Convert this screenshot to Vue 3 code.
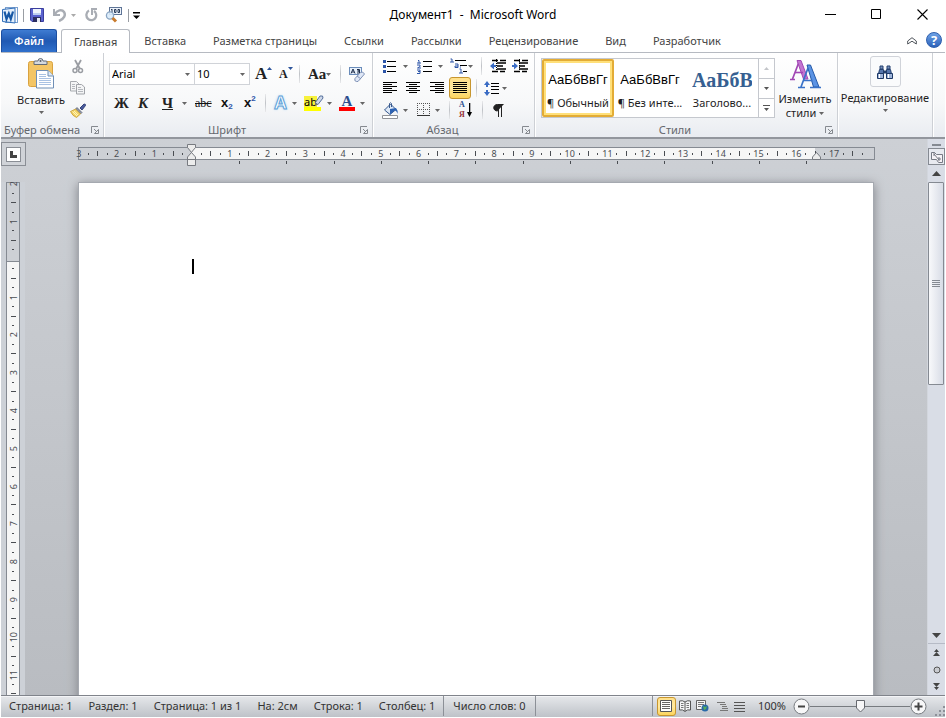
<script setup>
import { ref } from 'vue'

const tabs = ['Вставка', 'Разметка страницы', 'Ссылки', 'Рассылки', 'Рецензирование', 'Вид', 'Разработчик']
const font = ref('Arial')
const size = ref('10')
const zoom = ref(100)
const hMarks = ['3', '2', '1', '', ...Array.from({ length: 17 }, (_, i) => String(i + 1))]
const vMarks = ['2', '1', '', ...Array.from({ length: 27 }, (_, i) => String(i + 1))]
const status = ['Страница: 1', 'Раздел: 1', 'Страница: 1 из 1', 'На: 2см', 'Строка: 1', 'Столбец: 1']
</script>

<template>
  <div class="window">
    <header class="titlebar">
      <div class="quick">
        <svg class="logo" width="17" height="17" viewBox="0 0 17 17">
          <rect x="3.5" y=".5" width="12" height="15" fill="#fff" stroke="#7ba0cf" />
          <path d="M.5 2.500 13 1v15L.5 14.500z" fill="#e3effc" stroke="#2f6db8" />
          <path d="M2.500 4.500 4.500 12 6.800 6.500 8.800 12 11 4.500" fill="none" stroke="#1758a6" stroke-width="2.200" />
        </svg>
        <i class="rule" />
        <button aria-label="Сохранить"><svg width="15" height="15" viewBox="0 0 15 15">
          <path d="M.5.5h13v13H2L.5 12z" fill="#5a62cf" stroke="#3b3f9e" />
          <path d="M3 1h8v6H3z" fill="#eef3fc" /><path d="M3 5h8v2H3z" fill="#bccdf0" />
          <path d="M3 9h8v5H3z" fill="#2b2d60" /><path d="M7 10h3v4H7z" fill="#e9edf8" />
        </svg></button>
        <button aria-label="Отменить"><svg width="13" height="14" viewBox="0 0 13 14">
          <path d="M1 1v6h6" fill="none" stroke="#a9adb4" stroke-width="2" />
          <path d="M2 6c2-4 7-5 9-2s0 7-5 9" fill="none" stroke="#a9adb4" stroke-width="2.500" />
        </svg></button>
        <svg class="arrow pale" width="5" height="3" viewBox="0 0 5 3"><path d="M0 0h5L2.500 3z" /></svg>
        <button aria-label="Повторить"><svg width="13" height="14" viewBox="0 0 13 14">
          <path d="M4 2.500C1 4 .5 8.500 3 10.800s6.500 1.500 7.700-1.300S10.500 4 9 3" fill="none" stroke="#a9adb4" stroke-width="2.300" />
          <path d="M12 1H7v6" fill="none" stroke="#a9adb4" stroke-width="2" />
        </svg></button>
        <button aria-label="Масштаб 100%"><svg width="17" height="16" viewBox="0 0 17 16">
          <rect x="4.500" y=".5" width="12" height="7" fill="#edf3fb" stroke="#5e7496" />
          <path d="M7 2v4M6 2.500h1M9.500 2.500h1.500v3H9.500zM13 2.500h1.500v3H13z" fill="none" stroke="#283a59" />
          <circle cx="5" cy="8.500" r="3.600" fill="#d9ebf9" fill-opacity=".9" stroke="#8ba6c4" stroke-width="1.300" />
          <path d="m7.500 11 3.500 3.500" stroke="#c97b2d" stroke-width="3" />
        </svg></button>
        <i class="rule" />
        <button aria-label="Настройка панели"><svg width="7" height="7" viewBox="0 0 7 7"><path d="M0 0h7v1.500H0zM0 3.500h7L3.500 7z" /></svg></button>
      </div>
      <h1>Документ1&nbsp; -&nbsp; Microsoft Word</h1>
      <div class="winbtns">
        <button aria-label="Свернуть"><svg width="11" height="11" viewBox="0 0 11 11"><path d="M0 5.500h11" stroke="#000" /></svg></button>
        <button aria-label="Развернуть"><svg width="11" height="11" viewBox="0 0 11 11"><path d="M.5.5h9v9h-9z" fill="none" stroke="#000" /></svg></button>
        <button aria-label="Закрыть"><svg width="11" height="11" viewBox="0 0 11 11"><path d="m.5.5 10 10M10.500.5l-10 10" stroke="#000" stroke-width="1.100" /></svg></button>
      </div>
    </header>

    <nav class="tabs">
      <button class="file">Файл</button>
      <button class="tab active">Главная</button>
      <button v-for="t in tabs" :key="t" class="tab">{{ t }}</button>
      <span class="spacer" />
      <button aria-label="Свернуть ленту"><svg width="10" height="8" viewBox="0 0 10 8"><path d="M.7 4 5 .7 9.300 4v3L5 4.200.7 7z" fill="#fff" stroke="#50555c" /></svg></button>
      <button class="help" aria-label="Справка">?</button>
    </nav>

    <section class="ribbon">
      <div class="group clipboard">
        <div class="body">
          <button class="big paste">
            <svg width="27" height="32" viewBox="0 0 27 32">
              <rect x=".5" y="3.500" width="24" height="25" rx="2" fill="#f3c565" stroke="#d9a23f" />
              <path d="M6 6.500V4q0-1 1-1h3q0-2.500 2.500-2.500T15 3h3q1 0 1 1v2.500z" fill="#d4d9df" stroke="#626b77" /><circle cx="12.500" cy="3" r="1" fill="#58606b" />
              <path d="M8.500 12.500H20l5.500 5.500v12h-17z" fill="#fff" stroke="#6f8fb6" />
              <path d="M20 12.500V18h5.500" fill="#dce8f6" stroke="#6f8fb6" />
              <path d="M11 16.500h7M11 18.500h7M11 20.500h12M11 22.500h12M11 24.500h12M11 26.500h12" stroke="#a9c2e3" />
            </svg>
            <span>Вставить</span>
            <svg class="arrow" width="5" height="3" viewBox="0 0 5 3"><path d="M0 0h5L2.500 3z" /></svg>
          </button>
          <div class="stack">
            <button aria-label="Вырезать"><svg width="12" height="15" viewBox="0 0 12 15">
              <path d="m3 1 5 9M9 1l-5 9" stroke="#9a9da3" stroke-width="1.800" />
              <circle cx="3" cy="11.500" r="2" fill="none" stroke="#9a9da3" stroke-width="1.500" /><circle cx="8.500" cy="11.500" r="2" fill="none" stroke="#9a9da3" stroke-width="1.500" />
            </svg></button>
            <button aria-label="Копировать"><svg width="16" height="14" viewBox="0 0 16 14">
              <path d="M.5.5h6l2.500 2.500v7H.5z" fill="#f4f5f6" stroke="#a7aaaf" /><path d="M6.500 3.500h5L14.500 6v7h-8z" fill="#f4f5f6" stroke="#a0a3a8" />
              <path d="M2 3.500h3M2 5.500h3M2 7.500h3M8 6.500h3M8 8.500h5M8 10.500h5" stroke="#b5b8bd" />
            </svg></button>
            <button aria-label="Формат по образцу"><svg width="16" height="15" viewBox="0 0 16 15">
              <path d="m10 5 4-4q2 0 1.500 1.500L12 7z" fill="#4a5c9d" stroke="#36447b" />
              <path d="m7 4.500 5 5-1.500 1.500-5-5z" fill="#8d93a6" stroke="#585e70" stroke-width=".7" />
              <path d="m5.500 6 5 5-4 3.500Q2.500 13 .5 8.500z" fill="#f2d468" stroke="#c59a31" stroke-width=".8" /><path d="m4 8 4 4M2.500 8.500l4.500 4.500" stroke="#fff3b5" />
            </svg></button>
          </div>
        </div>
        <footer><span>Буфер обмена</span><svg class="launch" width="8" height="8" viewBox="0 0 8 8"><path d="M.5 7V.5H7M3 3l3 3M7.500 3.500v4h-4z" /></svg></footer>
      </div>

      <div class="group fontgroup">
        <div class="body">
          <div class="row r-font1">
            <label class="combo"><select v-model="font" aria-label="Шрифт"><option>Arial</option></select><svg class="arrow" width="5" height="3" viewBox="0 0 5 3"><path d="M0 0h5L2.500 3z" /></svg></label>
            <label class="combo short"><select v-model="size" aria-label="Размер"><option>10</option></select><svg class="arrow" width="5" height="3" viewBox="0 0 5 3"><path d="M0 0h5L2.500 3z" /></svg></label>
            <button class="serif grow">A<svg width="5" height="3" viewBox="0 0 5 3"><path d="M0 3h5L2.500 0z" fill="#2d549b" /></svg></button>
            <button class="serif shrink">A<svg width="5" height="3" viewBox="0 0 5 3"><path d="M0 0h5L2.500 3z" fill="#2d549b" /></svg></button>
            <i class="rule" />
            <button class="serif case">Aa</button>
            <svg class="arrow" width="5" height="3" viewBox="0 0 5 3"><path d="M0 0h5L2.500 3z" /></svg>
            <i class="rule" />
            <button aria-label="Очистить формат"><svg width="17" height="17" viewBox="0 0 17 17">
              <rect x=".5" y="1.500" width="12" height="7" fill="#e8f1fc" stroke="#6a8cba" />
              <path d="m2 7.500 2-4.500 2 4.500M3 6h2M8 3.500h2.500v1.500H8.500H10.500v2H8" fill="none" stroke="#1c2c4a" />
              <path d="M6 12.500 11.500 6.500Q14 5 15.500 8L9 15.500Q5 16 6 12.500z" fill="#dfe7f6" stroke="#7f92b6" /><path d="m8 10 4 3" stroke="#7f92b6" />
            </svg></button>
          </div>
          <div class="row r-font2">
            <button class="serif">Ж</button>
            <button class="serif italic">К</button>
            <button class="serif under">Ч</button>
            <svg class="arrow" width="5" height="3" viewBox="0 0 5 3"><path d="M0 0h5L2.500 3z" /></svg>
            <button class="strike">abc</button>
            <button class="sans-x">x<sub>2</sub></button>
            <button class="sans-x">x<sup>2</sup></button>
            <i class="rule" />
            <button class="glow">A</button>
            <svg class="arrow" width="5" height="3" viewBox="0 0 5 3"><path d="M0 0h5L2.500 3z" /></svg>
            <button class="mark"><span>ab</span><svg width="12" height="12" viewBox="0 0 12 12"><path d="M3 8 8 1h2.500l.5 2L6 9.500z" fill="#cfd9ea" stroke="#56709b" /><path d="M3 8v3l3-1.500" fill="#7a7b63" /></svg></button>
            <svg class="arrow" width="5" height="3" viewBox="0 0 5 3"><path d="M0 0h5L2.500 3z" /></svg>
            <button class="serif color">A</button>
            <svg class="arrow" width="5" height="3" viewBox="0 0 5 3"><path d="M0 0h5L2.500 3z" /></svg>
          </div>
        </div>
        <footer><span>Шрифт</span><svg class="launch" width="8" height="8" viewBox="0 0 8 8"><path d="M.5 7V.5H7M3 3l3 3M7.500 3.500v4h-4z" /></svg></footer>
      </div>

      <div class="group paragraph">
        <div class="body">
          <div class="row r-par1">
            <button aria-label="Маркеры"><svg width="15" height="14" viewBox="0 0 15 14"><path d="M5 2.500h9M5 7.500h9M5 12.500h9" stroke="#000" /><path d="M1 1h3v3H1zM1 6h3v3H1zM1 11h3v3H1z" fill="#2c55a8" /></svg></button>
            <svg class="arrow" width="5" height="3" viewBox="0 0 5 3"><path d="M0 0h5L2.500 3z" /></svg>
            <button aria-label="Нумерация"><svg width="15" height="15" viewBox="0 0 15 15"><path d="M6 2.500h9M6 7.500h9M6 12.500h9" stroke="#000" /><path d="M1 1.500h1v3M0 4h4M0 6h3v1.500L.5 9H4M0 11h3v3.500H0M1 12.500h2" fill="none" stroke="#2c55a8" /></svg></button>
            <svg class="arrow" width="5" height="3" viewBox="0 0 5 3"><path d="M0 0h5L2.500 3z" /></svg>
            <button aria-label="Многоуровневый список"><svg width="17" height="16" viewBox="0 0 17 16"><path d="M5 2.500h11M10 7.500h7M13 13.500h4" stroke="#000" /><path d="M.5 1H2v3M0 4h4M5 6h3v3.500H5V8h3M9.500 11H11v4M9 15h4M10 9h1" fill="none" stroke="#2c55a8" /></svg></button>
            <svg class="arrow" width="5" height="3" viewBox="0 0 5 3"><path d="M0 0h5L2.500 3z" /></svg>
            <i class="rule" />
            <button aria-label="Уменьшить отступ"><svg width="17" height="14" viewBox="0 0 17 14"><path d="M2 1.500h6M10 1.500h6M7 4h9M7 7h6M7 10h9M2 12.500h6M10 12.500h5" stroke="#000" stroke-width="1.400" /><path d="M6.500 0v14" stroke="#000" stroke-dasharray="1 1" /><path d="M6 6H4V3.500L0 7l4 3.500V8h2z" fill="#3a6cc4" /></svg></button>
            <button aria-label="Увеличить отступ"><svg width="17" height="14" viewBox="0 0 17 14"><path d="M2 1.500h6M10 1.500h6M7 4h9M7 7h6M7 10h9M2 12.500h6M10 12.500h5" stroke="#000" stroke-width="1.400" /><path d="M7.500 0v14" stroke="#000" stroke-dasharray="1 1" /><path d="M0 6h2V3.500L6 7l-4 3.500V8H0z" fill="#3a6cc4" /></svg></button>
          </div>
          <div class="row r-par2">
            <button aria-label="По левому краю"><svg width="16" height="12" viewBox="0 0 16 12"><path d="M1 .5h14M1 2.500h9M1 4.500h14M1 6.500h9M1 8.500h14M1 10.500h9" stroke="#000" /></svg></button>
            <button aria-label="По центру"><svg width="15" height="12" viewBox="0 0 15 12"><path d="M0 .5h14M3 2.500h8M0 4.500h14M3 6.500h8M0 8.500h14M3 10.500h8" stroke="#000" /></svg></button>
            <button aria-label="По правому краю"><svg width="15" height="12" viewBox="0 0 15 12"><path d="M0 .5h14M5 2.500h9M0 4.500h14M5 6.500h9M0 8.500h14M5 10.500h9" stroke="#000" /></svg></button>
            <button class="on" aria-label="По ширине"><svg width="14" height="12" viewBox="0 0 14 12"><path d="M0 .5h14M0 2.500h14M0 4.500h14M0 6.500h14M0 8.500h14M0 10.500h14" stroke="#000" /></svg></button>
            <i class="rule" />
            <button aria-label="Интервал"><svg width="16" height="15" viewBox="0 0 16 15"><path d="M7 2.500h8M7 5.500h8M7 8.500h8M7 12.500h8" stroke="#000" /><path d="M3 0 6 4H4v2H2V4H0zM3 15l3-4H4V9H2v2H0z" fill="#3a6cc4" /></svg></button>
            <svg class="arrow" width="5" height="3" viewBox="0 0 5 3"><path d="M0 0h5L2.500 3z" /></svg>
          </div>
          <div class="row r-par3">
            <button aria-label="Заливка"><svg width="17" height="17" viewBox="0 0 17 17"><path d="m2.500 8 6-6 5.500 5.500-6 5z" fill="#dce8f7" stroke="#37598e" /><path d="M7.500 6V1.500q1-1.500 2 0V5" fill="none" stroke="#37598e" /><path d="m8 7 6-1q2 2 1.500 6-1-4-3-3.500l-4.500 4z" fill="#2d62b3" /><path d="M.5 13.500h15v3H.5z" fill="#fff" stroke="#8f9298" /></svg></button>
            <svg class="arrow" width="5" height="3" viewBox="0 0 5 3"><path d="M0 0h5L2.500 3z" /></svg>
            <button aria-label="Границы"><svg width="14" height="14" viewBox="0 0 14 14"><path d="M.5 0v13M6.500 0v13M12.500 0v13M0 .5h13M0 6.500h13" stroke="#555" stroke-dasharray="1 1" /><path d="M0 12.500h13" stroke="#333" /></svg></button>
            <svg class="arrow" width="5" height="3" viewBox="0 0 5 3"><path d="M0 0h5L2.500 3z" /></svg>
            <i class="rule" />
            <button class="sort" aria-label="Сортировка"><span><b>А</b><b>Я</b></span><svg width="5" height="14" viewBox="0 0 5 14"><path d="M2 0h1.300v9H5l-2.500 5L0 9h2z" /></svg></button>
            <i class="rule" />
            <button aria-label="Знаки абзаца"><svg width="11" height="13" viewBox="0 0 11 13"><path d="M10.500.5h-6C-.5.5-.5 7 4.500 7" fill="#222" stroke="#222" /><path d="M5.500 1v12M8.500 1v12" stroke="#222" /></svg></button>
          </div>
        </div>
        <footer><span>Абзац</span><svg class="launch" width="8" height="8" viewBox="0 0 8 8"><path d="M.5 7V.5H7M3 3l3 3M7.500 3.500v4h-4z" /></svg></footer>
      </div>

      <div class="group styles">
        <div class="body">
          <div class="gallery">
            <button class="style selected"><span class="sample">АаБбВвГг</span><span class="name">¶ Обычный</span></button>
            <button class="style"><span class="sample">АаБбВвГг</span><span class="name">¶ Без инте...</span></button>
            <button class="style"><span class="sample heading">АаБбВв</span><span class="name">Заголово...</span></button>
            <div class="gscroll">
              <button aria-label="Вверх" class="off"><svg width="5" height="3" viewBox="0 0 5 3"><path d="M0 3h5L2.500 0z" /></svg></button>
              <button aria-label="Вниз"><svg width="5" height="3" viewBox="0 0 5 3"><path d="M0 0h5L2.500 3z" /></svg></button>
              <button aria-label="Ещё"><svg width="7" height="6" viewBox="0 0 7 6"><path d="M0 0h7v1H0zM1 3h5L3.500 6z" /></svg></button>
            </div>
          </div>
          <button class="big change">
            <svg width="31" height="29" viewBox="0 0 31 29">
              <path d="M0 19.500h5M2.500 19 9 2" fill="none" stroke="#a147b4" stroke-width="1.700" /><path d="M7 .5h4L18 19h-4.500z" fill="#c275d0" stroke="#a147b4" /><path d="M5 12.500h8" stroke="#a147b4" stroke-width="1.600" />
              <path d="M17 5h3.500L29 27h-5.500z" fill="#5b93e4" stroke="#255aa9" /><path d="m18 8-7 19M13.500 20.500h9M8 27.500h7M20 27.500h11" stroke="#3972c8" stroke-width="1.700" fill="none" />
            </svg>
            <span>Изменить</span>
            <span class="line">стили <svg class="arrow" width="5" height="3" viewBox="0 0 5 3"><path d="M0 0h5L2.500 3z" /></svg></span>
          </button>
        </div>
        <footer><span>Стили</span><svg class="launch" width="8" height="8" viewBox="0 0 8 8"><path d="M.5 7V.5H7M3 3l3 3M7.500 3.500v4h-4z" /></svg></footer>
      </div>

      <div class="group editing">
        <button class="big">
          <span class="tile"><svg width="16" height="14" viewBox="0 0 16 14">
            <path d="M3 1h3v3H3zM10 1h3v3h-3z" fill="#7892bd" stroke="#24406f" /><path d="M2.500 4.500h4V9h-5zM9.500 4.500h4l1 4.500h-5z" fill="#5475ac" stroke="#24406f" />
            <path d="M6.500 5.500h3v3h-3z" fill="#24406f" /><path d="M.5 8.500h6v5h-6zM9.500 8.500h6v5h-6z" fill="#9fb5da" stroke="#1d3866" /><path d="M2.500 9v4M11.500 9v4" stroke="#fff" />
          </svg></span>
          <span>Редактирование</span>
          <svg class="arrow" width="5" height="3" viewBox="0 0 5 3"><path d="M0 0h5L2.500 3z" /></svg>
        </button>
      </div>
    </section>

    <main class="work">
      <div class="canvas">
        <div class="top">
          <button class="tabstop" aria-label="Табуляция"><span><svg width="7" height="7" viewBox="0 0 7 7"><path d="M1.500 0v5.500H7" fill="none" stroke="#444" stroke-width="3" /></svg></span></button>
          <div class="hruler">
            <div class="strip"><div class="hcells">
              <div v-for="(m, i) in hMarks" :key="i" class="hcell"><span>{{ m }}</span><i class="dot" /><i class="tick" /><i class="dot" /></div>
            </div></div>
            <div class="stops"><i v-for="n in 13" :key="n" /></div>
            <svg class="indent" width="9" height="22" viewBox="0 0 9 22"><path d="M.5.5h8v3L5.500 7 4.500 8.500 8.500 13v8.500h-8V13l4-4.500L.5 3.500z" fill="#ececec" stroke="#777a80" /><path d="M1 15.500h7" stroke="#777a80" /></svg>
            <svg class="indent right" width="9" height="8" viewBox="0 0 9 8"><path d="M4.500.5 8.500 5v2.500h-8V5z" fill="#ececec" stroke="#777a80" /></svg>
          </div>
        </div>
        <div class="bottom">
          <div class="vruler"><div class="vstrip"><div class="vcells">
            <div v-for="(m, i) in vMarks" :key="i" class="vcell"><span>{{ m }}</span><i class="dot" /><i class="tick" /><i class="dot" /></div>
          </div></div></div>
          <div class="desk"><article class="paper"><i class="caret" /></article></div>
        </div>
      </div>
      <aside class="scroll">
        <i class="split" />
        <button class="rulerbtn" aria-label="Линейка"><svg width="12" height="12" viewBox="0 0 12 12"><path d="M.5 1.500h3l2 2h6v8h-4l-2-3h-5z" fill="#f6f2f6" stroke="#777b85" /><path d="m3 3 5 6M3 1v4M7 8h3M8 6v4" stroke="#777b85" /></svg></button>
        <button class="up" aria-label="Вверх"><svg width="9" height="5" viewBox="0 0 9 5"><path d="M0 5h9L4.500 0z" /></svg></button>
        <div class="rail"><div class="thumb"><i /><i /><i /><i /></div></div>
        <button class="down" aria-label="Вниз"><svg width="9" height="5" viewBox="0 0 9 5"><path d="M0 0h9L4.500 5z" /></svg></button>
        <div class="browse">
          <button aria-label="Предыдущая"><svg width="7" height="7" viewBox="0 0 7 7"><path d="M1 3h5L3.500 0zM0 7h7L3.500 3z" /></svg></button>
          <button aria-label="Объект перехода"><svg width="8" height="8" viewBox="0 0 8 8"><circle cx="4" cy="4" r="3" fill="#c9cbd0" stroke="#555" /></svg></button>
          <button aria-label="Следующая"><svg width="7" height="7" viewBox="0 0 7 7"><path d="M0 0h7L3.500 4zM1 4h5L3.500 7z" /></svg></button>
        </div>
      </aside>
    </main>

    <footer class="status">
      <span v-for="s in status" :key="s">{{ s }}</span>
      <span class="words">Число слов: 0</span>
      <span class="spacer" />
      <div class="views">
        <button class="on" aria-label="Разметка страницы"><svg width="12" height="12" viewBox="0 0 12 12"><path d="M.5.5h11v11H.5z" fill="#fff" stroke="#555" /><path d="M2 2.500h8M2 4.500h8M2 6.500h8M2 8.500h8" stroke="#666" /></svg></button>
        <button aria-label="Чтение"><svg width="12" height="12" viewBox="0 0 12 12"><path d="M6 2Q3.500 0 .5 1v9q3-1 5.500 1.500Q8.500 9 11.500 10V1Q8.500 0 6 2v9" fill="#f5f5f6" stroke="#555" /><path d="M2 3.500h2.500M2 5.500h2.500M2 7.500h2.500M7.500 3.500H10M7.500 5.500H10M7.500 7.500H10" stroke="#777" /></svg></button>
        <button aria-label="Веб-документ"><svg width="13" height="12" viewBox="0 0 13 12"><path d="M.5.5h9v9h-9z" fill="#f5f5f6" stroke="#666" /><path d="M2 2.500h6M2 4.500h6M2 6.500h3" stroke="#777" /><circle cx="9" cy="8" r="3.500" fill="#2969a8" /><path d="m7 6 2 1 2-1-1 3-2 1z" fill="#55b058" /></svg></button>
        <button aria-label="Структура"><svg width="11" height="11" viewBox="0 0 11 11"><path d="M0 1.500h8M3 3.500h6M5 5.500h5M5 7.500h6M3 9.500h8" stroke="#777" /></svg></button>
        <button aria-label="Черновик"><svg width="11" height="11" viewBox="0 0 11 11"><path d="M0 1.500h11M0 4.500h11M0 7.500h11M0 10.500h11" stroke="#555" /></svg></button>
      </div>
      <button class="percent">{{ zoom }}%</button>
      <button class="round minus" aria-label="Уменьшить"><svg width="17" height="17" viewBox="0 0 17 17"><circle cx="8.500" cy="8.500" r="7.500" fill="#f7f7f8" stroke="#777b80" /><path d="M5 8.500h7" stroke="#444" stroke-width="2" /></svg></button>
      <input v-model="zoom" class="slider" type="range" min="0" max="200" aria-label="Масштаб">
      <button class="round plus" aria-label="Увеличить"><svg width="17" height="17" viewBox="0 0 17 17"><circle cx="8.500" cy="8.500" r="7.500" fill="#f7f7f8" stroke="#777b80" /><path d="M4.500 8.500h8M8.500 4.500v8" stroke="#444" stroke-width="2" /></svg></button>
      <svg class="grip" width="10" height="10" viewBox="0 0 10 10"><path d="M8 0h2v2H8zM4 4h2v2H4zM8 4h2v2H8zM0 8h2v2H0zM4 8h2v2H4zM8 8h2v2H8z" fill="#8c9098" /></svg>
    </footer>
  </div>
</template>

<style>
body { margin: 0; background: #fff; }
</style>

<style scoped>
* { box-sizing: border-box; }
.window { display: flex; flex-direction: column; height: 100vh; padding: 0 1px 1px; overflow: hidden; font: 11px/14px "Noto Sans", "Open Sans", sans-serif; color: #3b3b3b; background: #fff; }
button { display: flex; align-items: center; justify-content: center; padding: 0; border: 0; background: none; font: inherit; color: inherit; white-space: nowrap; }
svg { display: block; flex: none; }
i { display: block; flex: none; }
.spacer { flex: 1; }
.arrow { fill: #666; }
.pale { fill: #aaa; }
.rule { width: 1px; height: 18px; background: linear-gradient(#e8e9eb, #bfc2c7, #e8e9eb); }

.titlebar { position: relative; display: flex; align-items: center; height: 29px; flex: none; justify-content: space-between; }
.quick { display: grid; grid-template-columns: 21px 7px 23px 18px 14px 20px 23px 5px 8px; align-items: center; padding-left: 1px; padding-top: 1px; justify-items: start; }
.quick .rule { height: 13px; background: #999da3; }
h1 { position: absolute; left: 0; right: 0; margin: 0; text-align: center; font-size: 12px; line-height: 16px; font-weight: 400; color: #000; pointer-events: none; }
.winbtns { display: flex; }
.winbtns button { width: 46px; height: 28px; }

.tabs { display: flex; height: 24px; flex: none; border-bottom: 1px solid #b6bac1; padding-right: 3px; }
.file { width: 56px; margin-right: 4px; border: 1px solid #1d4fa0; border-bottom: 0; border-radius: 3px 3px 0 0; background: linear-gradient(#3f7cd2, #2059b3 50%, #2f70cc); color: #fff; font-weight: 600; }
.tab { padding: 0 13px 0 14px; color: #444; }
.active { height: 24px; padding: 0 12px; background: #fff; border: 1px solid #b6bac1; border-bottom: 0; border-radius: 3px 3px 0 0; }
.help { width: 16px; height: 16px; margin: 3px 0 0 9px; border-radius: 50%; border: 1px solid #2e5fae; background: linear-gradient(#6fa3e6, #2c62ba); color: #fff; font-size: 13px; font-weight: 700; }

.ribbon { display: flex; height: 86px; flex: none; padding-left: 1px; background: linear-gradient(#fff, #f7f8f9 60%, #e9ecf1); border-bottom: 2px solid #92969d; }
.group { display: flex; flex-direction: column; border-right: 1px solid #cdd0d5; box-shadow: 1px 0 #fff; color: #1e1e1e; }
.body { flex: 1; }
.group footer { display: grid; grid-template-columns: 1fr 18px; align-items: center; justify-items: end; height: 15px; padding-right: 4px; color: #65686e; text-align: center; }
.group footer span { width: 100%; }
.launch { fill: none; stroke: #85898f; }
.clipboard { width: 102px; }
.clipboard .body { display: flex; }
.clipboard footer span { text-align: left; padding-left: 2px; }
.big { flex-direction: column; justify-content: flex-start; font-size: 11px; }
.paste { width: 66px; margin-left: 6px; padding-top: 5px; }
.paste span { padding-top: 3px; }
.paste .arrow { margin-top: 4px; }
.stack { display: grid; grid-template-rows: 22px 22px 22px; padding-top: 2px; margin-left: -4px; width: 16px; }
.row { display: grid; align-items: center; justify-items: start; }
.fontgroup { width: 269px; }
.fontgroup .body { padding-left: 5px; }
.fontgroup .row { height: 22px; }
.r-font1 { grid-template-columns: 86px 60px 24px 20px 9px 18px 14px 9px 18px; margin-top: 10px; }
.r-font2 { grid-template-columns: 24px 24px 20px 13px 26px 23px 21px 9px 18px 12px 23px 12px 21px 8px; padding-left: 5px; margin-top: 7px; }
.combo { display: flex; align-items: center; width: 86px; height: 22px; border: 1px solid #d0d3d8; background: #fff; padding-right: 4px; }
.combo.short { width: 55px; border-left: 0; }
select { appearance: none; flex: 1; min-width: 0; height: 20px; border: 0; background: none; padding: 0 2px; font: 11px/14px "Noto Sans", sans-serif; color: #000; }
.serif { font: 700 15px/18px "Liberation Serif", serif; color: #222; }
.serif svg { align-self: flex-start; margin-top: 2px; }
.grow { font-size: 17px; }
.shrink { font-size: 12px; }
.italic { font-style: italic; }
.under { text-decoration: underline; }
.strike { font: 12px/16px "Liberation Serif", serif; text-decoration: line-through; color: #111; }
.sans-x { font: 700 13px/16px "Liberation Sans", sans-serif; color: #111; align-items: center; }
.sans-x sub, .sans-x sup { font-size: 8px; line-height: 8px; color: #2c55a8; }
.sans-x sub { align-self: flex-end; }
.sans-x sup { align-self: flex-start; }
.glow { font: 700 18px/18px "Liberation Sans", sans-serif; color: #fff; -webkit-text-stroke: 1px #5d9fd8; text-shadow: 0 0 3px #8cc3ee; }
.mark { height: 16px; width: 17px; border-bottom: 4px solid #ff0; justify-content: flex-start; }
.mark span { background: #f7f13c; color: #000; line-height: 11px; }
.mark svg { margin-left: -5px; }
.color { width: 16px; height: 16px; line-height: 12px; color: #2d4f8f; border-bottom: 4px solid #f00; }

.paragraph { width: 162px; }
.paragraph .row { height: 22px; }
.paragraph .body { padding: 2px 0 0 9px; }
.r-par1 { grid-template-columns: 21px 14px 21px 12px 18px 13px 9px 22px 16px; }
.r-par2 { grid-template-columns: 24px 24px 19px 27px 8px 18px 6px; }
.r-par3 { grid-template-columns: 21px 14px 18px 14px 10px 23px 11px 12px; }
.on { background: linear-gradient(#ffe08a, #ffe9a0 50%, #fdd45c); border: 1px solid #c7962f; border-radius: 3px; }
.r-par2 .on { width: 22px; height: 22px; }
.sort span { display: grid; font: 700 8px/10px "Liberation Serif", serif; color: #2d4f8f; }
.sort b + b { color: #93333a; }
.sort svg { margin-left: 2px; }

.styles { width: 303px; }
.styles .body { display: flex; }
.gallery { display: grid; grid-template-columns: repeat(3, 72px) 16px; width: 234px; height: 60px; margin: 5px 0 0 6px; border: 1px solid #c5c8ce; background: #fff; }
.style { flex-direction: column; height: 58px; padding: 0 4px; overflow: hidden; }
.selected { border: 2px solid #e3ac35; border-radius: 2px; box-shadow: inset 0 0 0 2px #ffe07a; padding: 0 2px; }
.sample { height: 28px; max-width: 60px; overflow: hidden; font: 13px/28px "Liberation Sans", Arial, sans-serif; color: #000; }
.heading { font: 700 20px/28px "Liberation Serif", serif; color: #365f91; }
.name { height: 17px; line-height: 17px; }
.gscroll { display: grid; grid-template-rows: 1fr 1fr 1fr; border-left: 1px solid #c5c8ce; }
.gscroll button + button { border-top: 1px solid #c5c8ce; }
.gscroll svg { fill: #555; }
.gscroll .off svg { fill: #c3c5c9; }
.change { width: 60px; padding-top: 7px; line-height: 14px; }
.change span { padding-top: 3px; }
.change .line { display: flex; align-items: center; gap: 3px; padding-top: 0; }
.editing { width: 95px; }
.tile { display: grid; place-items: center; width: 31px; height: 31px; margin: 3px 0 4px; border: 1px solid #d0d3d9; border-radius: 3px; background: #fafbfc; }
.editing .arrow { margin-top: 4px; }

.work { flex: 1; min-height: 0; display: flex; overflow: hidden; background: linear-gradient(#cdd0d5, #b9bcc1); }
.canvas { flex: 1; min-width: 0; display: flex; flex-direction: column; }
.top { display: flex; height: 43px; flex: none; }
.tabstop { width: 25px; height: 24px; margin-top: 3px; border: 1px solid #8a8e95; background: #d0d3d8; }
.tabstop span { display: grid; place-items: center; width: 15px; height: 15px; border: 1px solid #8a8e95; background: #fff; }
.hruler { position: relative; flex: 1; margin: 8px 52px 0 52px; font-size: 9px; line-height: 10px; color: #4a4d52; }
.strip { height: 13px; border: 1px solid #858a92; background: linear-gradient(90deg, #cdd0d5 14.2%, #f6f6f6 14.2% 92.6%, #cdd0d5 92.6%); }
.hcells { display: flex; height: 11px; margin-left: -5px; margin-right: 7px; }
.hcell { flex: 1; display: grid; grid-template-columns: repeat(4, minmax(0, 1fr)); place-items: center; }
.hcell span { white-space: nowrap; }
.dot { width: 1px; height: 2px; background: #4a4d52; }
.tick { width: 1px; height: 5px; background: #4a4d52; }
.stops { display: flex; padding-left: 14.4%; }
.stops i { width: 6.93%; height: 3px; margin-top: 1px; border-right: 1px solid #4a4d52; }
.indent { position: absolute; top: -3px; left: calc(14.2% - 4px); }
.right { top: 5px; left: calc(92.6% - 4px); }
.bottom { flex: 1; min-height: 0; display: flex; }
.vruler { width: 24px; padding-left: 5px; overflow: hidden; background: #cdd1d7; }
.vstrip { width: 14px; height: 1134px; border: 1px solid #858a92; background: linear-gradient(#cdd0d5 78px, #858a92 78px 79px, #f6f6f6 79px); }
.vcells { display: flex; flex-direction: column; height: 1134px; margin-top: -4px; font-size: 9px; line-height: 9px; color: #4a4d52; }
.vcell { flex: 1 1 0; min-height: 0; display: grid; grid-template-rows: repeat(4, minmax(0, 1fr)); place-items: center; }
.vcell span { writing-mode: vertical-rl; transform: rotate(180deg); }
.vcell .dot { width: 2px; height: 1px; }
.vcell .tick { width: 5px; height: 1px; }
.desk { flex: 1; padding: 0 53px; }
.paper { height: 1134px; padding: 76px 113px; background: #fff; border: 1px solid #a5a9b0; box-shadow: 0 2px 10px #7f8288; }
.caret { width: 2px; height: 15px; background: #000; }

.scroll { display: flex; flex-direction: column; width: 18px; background: #d9dde6; border-left: 1px solid #d2d6dd; }
.scroll svg { fill: #444; }
.split { width: 9px; height: 2px; margin: 5px auto 2px; background: #858a92; }
.rulerbtn { height: 17px; border: 1px solid #858a92; background: #e8eaf0; }
.up { height: 17px; }
.rail { flex: 1; }
.thumb { display: flex; flex-direction: column; align-items: center; justify-content: center; gap: 1px; width: 16px; height: 45.6%; border: 1px solid #858a92; border-radius: 1px; background: linear-gradient(90deg, #f8f9fb, #d8dce6); }
.thumb i { width: 8px; height: 1px; background: #858a92; }
.down { height: 16px; }
.browse { display: grid; grid-template-rows: repeat(3, 17px); border-top: 1px solid #b6bbc6; }

.status { display: flex; align-items: center; height: 22px; flex: none; padding: 0 0 1px 8px; border-top: 1px solid #80848b; background: linear-gradient(#e6e8eb, #bec2c8); box-shadow: inset 0 1px #f4f5f7; color: #333; gap: 16px; }
.status > span { white-space: nowrap; }
.words { margin-left: -8px; padding: 0 9px; border: solid #8c9097; border-width: 0 1px; line-height: 20px; }
.views { display: grid; grid-template-columns: 22px 17px 21px 17px 12px; align-items: center; justify-items: start; padding-left: 4px; border-left: 1px solid #8c9097; height: 20px; }
.views .on { width: 19px; height: 19px; }
.percent { margin-left: -4px; }
.minus { margin: 0 -16px 0 -9px; }
.plus { margin: 0 6px 0 -16px; }
.slider { appearance: none; width: 100px; height: 16px; margin: 0; background: linear-gradient(#777b80, #777b80) center / 100% 1px no-repeat; }
.slider::-webkit-slider-thumb { appearance: none; width: 9px; height: 13px; background: url("data:image/svg+xml,%3Csvg xmlns='http://www.w3.org/2000/svg' width='9' height='13'%3E%3Cpath d='M.5.5h8V8l-4 4-4-4z' fill='%23f7f7f8' stroke='%2366696f'/%3E%3C/svg%3E"); }
.grip { align-self: flex-end; margin-left: -14px; }
</style>
